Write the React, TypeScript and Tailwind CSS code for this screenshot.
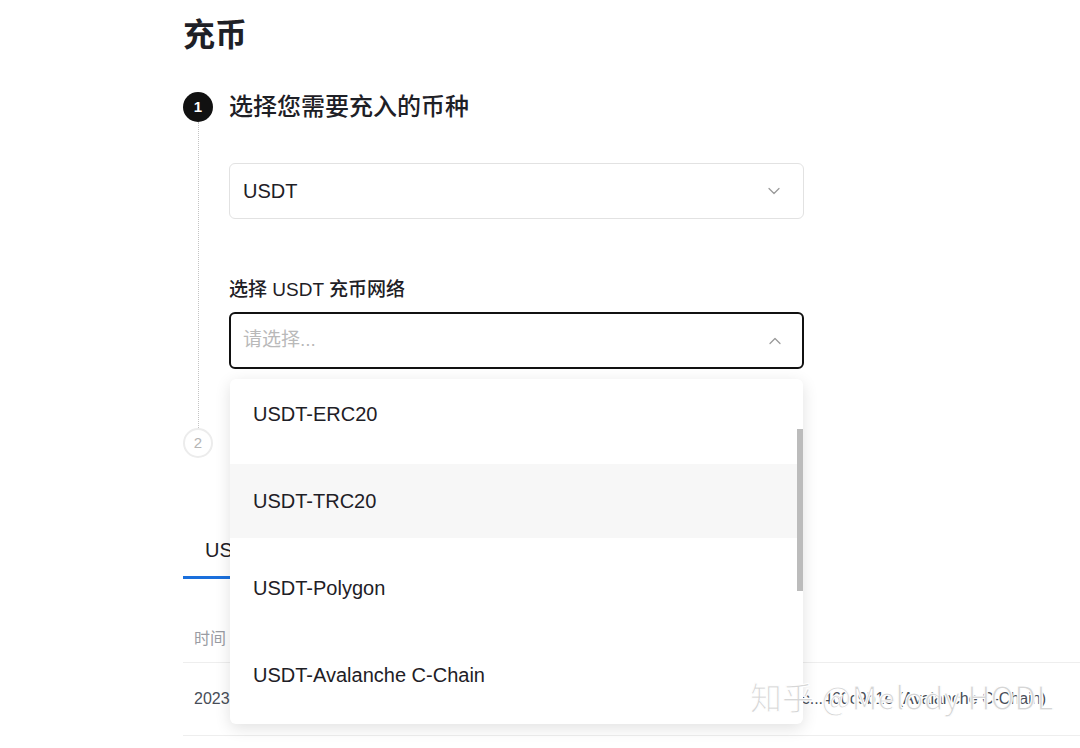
import { ChevronDown, ChevronUp } from 'lucide-react';

const networks = ['USDT-ERC20', 'USDT-TRC20', 'USDT-Polygon', 'USDT-Avalanche C-Chain'];

const font = { fontFamily: '"Liberation Sans", "Noto Sans CJK SC", sans-serif' };

export default function App() {
  return (
    <div className="relative h-[748px] w-[1080px] overflow-hidden bg-white text-[#1e2026]" style={font}>
      <div className="pl-[183px] pt-[14px]">
        <h1 className="text-[32px] font-semibold leading-[42px]">充币</h1>

        <div className="mt-[36px] flex">
          {/* step rail */}
          <div className="flex w-[30px] flex-col items-center">
            <div className="flex h-[30px] w-[30px] items-center justify-center rounded-full bg-[#111] text-[15px] font-bold text-white">
              1
            </div>
            <div className="h-[306px] border-l border-dotted border-[#c4c4c4]" />
            <div className="flex h-[30px] w-[30px] items-center justify-center rounded-full border-2 border-[#ececec] text-[15px] text-[#b5b5b5]">
              2
            </div>
          </div>

          {/* step content */}
          <div className="relative ml-[16px] w-[575px]">
            <div className="text-[24px] font-medium leading-[30px]">选择您需要充入的币种</div>

            <div className="mt-[41px] flex h-[56px] items-center justify-between rounded-md border border-[#e2e2e2] px-[13px]">
              <span className="text-[20px]">USDT</span>
              <ChevronDown size={20} strokeWidth={1.5} className="mr-[6px] text-[#9a9a9a]" />
            </div>

            <div className="mt-[59px] text-[19px] font-medium leading-[24px]">选择 USDT 充币网络</div>

            <div className="mt-[10px] flex h-[57px] items-center justify-between rounded-md border-2 border-[#111] px-[12px]">
              <span className="text-[19px] text-[#b9b9b9]">请选择...</span>
              <ChevronUp size={20} strokeWidth={1.5} className="mr-[5px] text-[#9a9a9a]" />
            </div>

            {/* dropdown menu */}
            <div className="absolute left-[1px] top-[287px] z-10 h-[345px] w-[573px] overflow-hidden rounded-md bg-white shadow-[0_4px_16px_rgba(0,0,0,0.12)]">
              <div className="-mt-[2px] flex flex-col gap-[13px]">
                {networks.map((n) => (
                  <div
                    key={n}
                    className={`flex h-[74px] items-center pl-[23px] text-[20px] font-medium ${
                      n === 'USDT-TRC20' ? 'bg-[#f7f7f7]' : ''
                    }`}
                  >
                    {n}
                  </div>
                ))}
              </div>
              <div className="absolute right-[0px] top-[50px] h-[162px] w-[6px] bg-[#bcbcbc]" />
            </div>
          </div>
        </div>

        {/* history tabs */}
        <div className="mt-[78px] flex">
          <div className="border-b-[3px] border-[#1a6fdc] px-[22px] pb-[12px] text-[20px] font-medium leading-[28px]">
            USDT 充币记录
          </div>
        </div>

        <div className="mt-[48px] flex h-[36px] items-start border-b border-[#eeeeee] pl-[11px] text-[16px] text-[#9a9ca3]">
          时间
        </div>
        <div className="flex h-[73px] items-center justify-between border-b border-[#eeeeee] pl-[11px] pr-[34px] text-[16px] text-[#474d57]">
          <span>2023-03-05 14:21:08</span>
          <span>0x2f1c...460c9b1e (Avalanche C-Chain)</span>
        </div>
      </div>

      {/* watermark */}
      <div
        className="pointer-events-none absolute left-[750px] top-[676px] z-20 text-[32px] leading-[40px] text-[#d6d6d6]"
        style={{ WebkitTextStroke: '1px #ffffff', fontFamily: '"Noto Sans CJK SC", sans-serif' }}
      >
        知乎 @Melody HODL
      </div>
    </div>
  );
}
